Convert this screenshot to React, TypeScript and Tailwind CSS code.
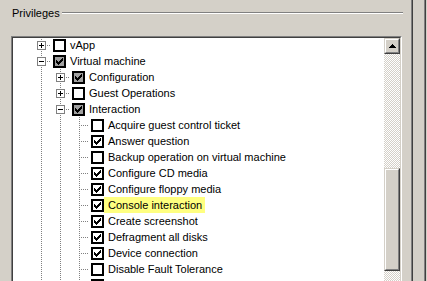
import React from 'react';

type Check = 'off' | 'on' | 'partial';

interface Node {
  level: number;
  label: string;
  expander?: 'plus' | 'minus';
  check: Check;
  highlight?: boolean;
}

const nodes: Node[] = [
  { level: 1, label: 'vApp', expander: 'plus', check: 'off' },
  { level: 1, label: 'Virtual machine', expander: 'minus', check: 'partial' },
  { level: 2, label: 'Configuration', expander: 'plus', check: 'partial' },
  { level: 2, label: 'Guest Operations', expander: 'plus', check: 'off' },
  { level: 2, label: 'Interaction', expander: 'minus', check: 'partial' },
  { level: 3, label: 'Acquire guest control ticket', check: 'off' },
  { level: 3, label: 'Answer question', check: 'on' },
  { level: 3, label: 'Backup operation on virtual machine', check: 'off' },
  { level: 3, label: 'Configure CD media', check: 'on' },
  { level: 3, label: 'Configure floppy media', check: 'on' },
  { level: 3, label: 'Console interaction', check: 'on', highlight: true },
  { level: 3, label: 'Create screenshot', check: 'on' },
  { level: 3, label: 'Defragment all disks', check: 'on' },
  { level: 3, label: 'Device connection', check: 'on' },
  { level: 3, label: 'Disable Fault Tolerance', check: 'off' },
  { level: 3, label: 'Enable Fault Tolerance', check: 'on' },
];

// pixel check mark (7x7), standard windows glyph
const CHECK_PIXELS: [number, number][] = [
  [6, 0],
  [5, 1], [6, 1],
  [0, 2], [4, 2], [5, 2], [6, 2],
  [0, 3], [1, 3], [3, 3], [4, 3], [5, 3],
  [0, 4], [1, 4], [2, 4], [3, 4], [4, 4],
  [1, 5], [2, 5], [3, 5],
  [2, 6],
];

function TreeCell({ vertical, own, expander }: { vertical: boolean; own?: boolean; expander?: 'plus' | 'minus' }) {
  const dotsV = vertical ? Array.from({ length: 8 }, (_, i) => i * 2) : [];
  const dotsH = own ? [11, 13, 15, 17] : [];
  return (
    <svg width="19" height="16" viewBox="0 0 19 16" shapeRendering="crispEdges" className="shrink-0">
      {dotsV.map((y) => (
        <rect key={'v' + y} x="9" y={y} width="1" height="1" fill="#808080" />
      ))}
      {dotsH.map((x) => (
        <rect key={'h' + x} x={x} y="8" width="1" height="1" fill="#808080" />
      ))}
      {expander && (
        <g>
          <rect x="5.5" y="4.5" width="8" height="8" fill="#fff" stroke="#808080" />
          <rect x="7" y="8" width="5" height="1" fill="#000" />
          {expander === 'plus' && <rect x="9" y="6" width="1" height="5" fill="#000" />}
        </g>
      )}
    </svg>
  );
}

function CheckBox({ state }: { state: Check }) {
  return (
    <svg width="13" height="13" viewBox="0 0 13 13" shapeRendering="crispEdges" className="shrink-0 ml-[2px]">
      <rect x="0" y="0" width="13" height="13" fill="#000" />
      <rect x="2" y="2" width="9" height="9" fill={state === 'partial' ? '#a0a0a0' : '#fff'} />
      {state !== 'off' &&
        CHECK_PIXELS.map(([x, y]) => (
          <rect key={x + '-' + y} x={x + 3} y={y + 3} width="1" height="1" fill="#000" />
        ))}
    </svg>
  );
}

function TreeRow({ node }: { node: Node }) {
  const cells = [];
  for (let l = 0; l <= node.level; l++) {
    if (l === 0) {
      cells.push(<TreeCell key={l} vertical={false} />);
    } else if (l < node.level) {
      cells.push(<TreeCell key={l} vertical />);
    } else {
      cells.push(<TreeCell key={l} vertical own expander={node.expander} />);
    }
  }
  return (
    <div className="flex items-center h-[16px] whitespace-nowrap">
      {cells}
      <CheckBox state={node.check} />
      <span className={`pl-[4px] pr-[3px] leading-[16px] h-[16px] text-black ${node.highlight ? 'bg-[#ffff80]' : ''}`}>
        {node.label}
      </span>
    </div>
  );
}

const raised =
  'border-t border-l border-t-[#d4d0c8] border-l-[#d4d0c8] border-r border-b border-r-[#404040] border-b-[#404040]';
const raisedInner =
  'border-t border-l border-t-white border-l-white border-r border-b border-r-[#808080] border-b-[#808080] bg-[#d4d0c8]';
const track =
  'bg-[repeating-conic-gradient(#d4d0c8_0%_25%,#ffffff_0%_50%)] bg-[length:2px_2px]';

export default function App() {
  return (
    <div className="w-[427px] h-[281px] overflow-hidden bg-[#d4d0c8] flex font-['Liberation_Sans',Arial,sans-serif] text-[11px] text-black">
      {/* Privileges group */}
      <div className="w-[411px] shrink-0 flex flex-col pt-[6px]">
        <div className="flex items-center h-[14px]">
          <span className="w-[62px] pl-[12px] shrink-0 leading-[14px]">Privileges</span>
          <div className="w-[341px] h-[2px] border-t border-t-[#808080] border-b border-b-white" />
        </div>

        {/* tree view */}
        <div className="mt-[16px] ml-[11px] w-[391px] flex-1 border-t border-l border-t-[#808080] border-l-[#808080] border-r border-r-white">
          <div className="h-full flex border-t border-l border-t-[#404040] border-l-[#404040] border-r border-r-[#d4d0c8]">
            <div className="flex-1 bg-white overflow-hidden">
              <div className="-mt-px flex flex-col">
                {nodes.map((n) => (
                  <TreeRow key={n.label} node={n} />
                ))}
              </div>
            </div>

            {/* vertical scrollbar */}
            <div className="w-[16px] shrink-0 flex flex-col">
              <div className={`h-[16px] ${raised}`}>
                <div className={`h-full flex items-center justify-center ${raisedInner}`}>
                  <svg width="7" height="4" viewBox="0 0 7 4" shapeRendering="crispEdges">
                    <path d="M3 0h1v1h1v1h1v1h1v1H0V3h1V2h1V1h1z" fill="#000" />
                  </svg>
                </div>
              </div>
              <div className={`h-[114px] ${track}`} />
              <div className={`h-[103px] ${raised}`}>
                <div className={`h-full ${raisedInner}`} />
              </div>
              <div className={`flex-1 ${track}`} />
            </div>
          </div>
        </div>
      </div>

      {/* right hand splitter edges */}
      <div className="flex-1 flex">
        <div className="w-px bg-[#808080]" />
        <div className="w-px bg-[#404040]" />
        <div className="w-[11px]" />
        <div className="w-px bg-[#808080]" />
        <div className="w-px bg-[#404040]" />
      </div>
    </div>
  );
}
